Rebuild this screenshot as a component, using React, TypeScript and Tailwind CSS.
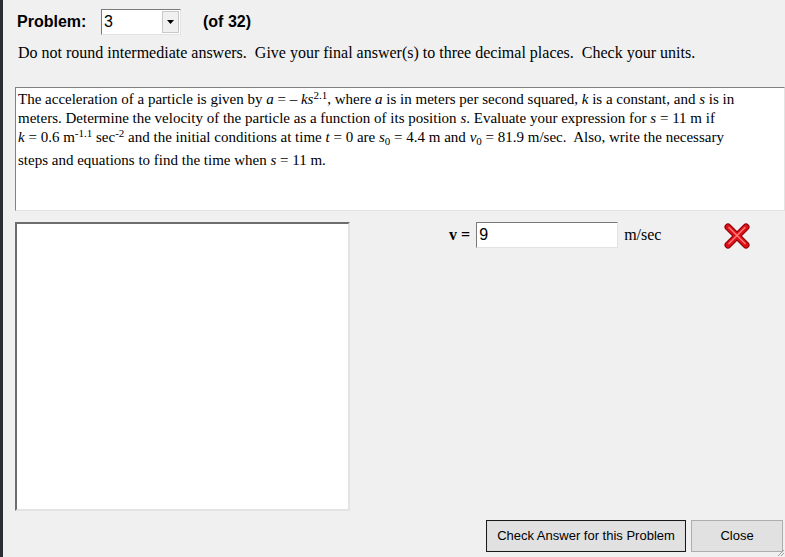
import { useState } from "react";

function RedX() {
  return (
    <svg width="26" height="26" viewBox="0 0 26 26">
      <g strokeLinecap="round">
        <path d="M4 4 L22 22 M22 4 L4 22" stroke="#8a0000" strokeWidth="7" />
        <path d="M4 4 L22 22 M22 4 L4 22" stroke="#e0101a" strokeWidth="5" />
        <path d="M5 4.5 L21 20.5 M21 4.5 L5 20.5" stroke="#ff7a7a" strokeWidth="1.5" />
      </g>
    </svg>
  );
}

function Grip() {
  return (
    <svg width="10" height="10" viewBox="0 0 10 10" className="absolute bottom-0 right-0">
      <path d="M9 3 L3 9 M9 6 L6 9" stroke="#a0a0a0" strokeWidth="1" />
    </svg>
  );
}

function App() {
  const [answer, setAnswer] = useState("9");
  const serif = "font-['Liberation_Serif','Times_New_Roman',serif]";
  const sans = "font-['Liberation_Sans',Arial,sans-serif]";

  return (
    <div className="relative flex h-[557px] w-[785px] overflow-hidden bg-[#f0f0f0]">
      <div className="w-[3px] shrink-0 bg-[#2b2f33]"></div>
      <div className="flex min-w-0 flex-1 flex-col pl-[12px]">
        {/* header */}
        <div className={`mt-[9px] flex h-[26px] items-center text-[16px] font-bold text-black ${sans}`}>
          <span className="ml-[2px] w-[84px]">Problem:</span>
          <div className="flex h-[26px] w-[80px] border border-t-[#7a7a7a] border-l-[#7a7a7a] border-r-[#e3e3e3] border-b-[#e3e3e3] bg-white">
            <span className="flex-1 pl-[2px] font-normal leading-[24px]">3</span>
            <div className="m-[1px] flex w-[17px] items-center justify-center border border-[#c8c8c8] bg-[#f0f0f0]">
              <svg width="7" height="4" viewBox="0 0 7 4">
                <path d="M0 0 L7 0 L3.5 4 Z" fill="#000" />
              </svg>
            </div>
          </div>
          <span className="ml-[22px]">(of 32)</span>
        </div>

        {/* instructions */}
        <p className={`mt-[8px] ml-[3px] whitespace-pre text-[16px] leading-[20px] text-black ${serif}`}>
          {"Do not round intermediate answers.  Give your final answer(s) to three decimal places.  Check your units."}
        </p>

        {/* problem text */}
        <div
          className={`mt-[24px] h-[124px] w-[770px] overflow-hidden border border-t-[#828282] border-l-[#828282] border-r-[#e3e3e3] border-b-[#e3e3e3] bg-white px-[2px] pt-[2px] text-[15px] leading-[19px] text-black ${serif}`}
        >
          <div className="whitespace-nowrap">
            The acceleration of a particle is given by <i>a</i> = – <i>ks</i>
            <sup className="text-[11px]">2.1</sup>, where <i>a</i> is in meters per second squared,{" "}
            <i>k</i> is a constant, and <i>s</i> is in
          </div>
          <div className="whitespace-nowrap">
            meters. Determine the velocity of the particle as a function of its position <i>s</i>.
            Evaluate your expression for <i>s</i> = 11 m if
          </div>
          <div className="whitespace-pre">
            <i>k</i> = 0.6 m<sup className="text-[11px]">-1.1</sup> sec<sup className="text-[11px]">-2</sup>{" "}
            and the initial conditions at time <i>t</i> = 0 are <i>s</i>
            <sub className="text-[11px]">0</sub> = 4.4 m and <i>v</i>
            <sub className="text-[11px]">0</sub>
            {" = 81.9 m/sec.  Also, write the necessary"}
          </div>
          <div className="mt-[4px] whitespace-nowrap">
            steps and equations to find the time when <i>s</i> = 11 m.
          </div>
        </div>

        {/* work area + answer */}
        <div className="mt-[11px] flex">
          <div className="h-[289px] w-[335px] shrink-0 border-2 border-t-[#6d6d6d] border-l-[#6d6d6d] border-r-[#e3e3e3] border-b-[#e3e3e3] bg-white"></div>
          <div className="flex h-[26px] items-center">
            <span className={`ml-[99px] text-[16px] font-bold text-black ${serif}`}>v =</span>
            <input
              value={answer}
              onChange={(e) => setAnswer(e.target.value)}
              className={`ml-[6px] h-[26px] w-[142px] border border-t-[#7a7a7a] border-l-[#7a7a7a] border-r-[#e3e3e3] border-b-[#e3e3e3] bg-white px-[2px] text-[16px] text-black outline-none ${sans}`}
            />
            <span className={`ml-[6px] text-[16px] text-black ${serif}`}>m/sec</span>
            <div className="ml-[63px] mt-[1px]">
              <RedX />
            </div>
          </div>
        </div>

        {/* buttons */}
        <div className={`mt-auto flex justify-end pb-[5px] pr-[2px] text-[13px] text-black ${sans}`}>
          <button className="h-[32px] w-[200px] border border-[#1a1a1a] bg-[#e1e1e1] shadow-[inset_0_0_0_1px_#dcdcdc]">
            Check Answer for this Problem
          </button>
          <button className="ml-[5px] h-[32px] w-[92px] border border-[#adadad] bg-[#e1e1e1]">
            Close
          </button>
        </div>
      </div>
      <Grip />
    </div>
  );
}

export default App;
